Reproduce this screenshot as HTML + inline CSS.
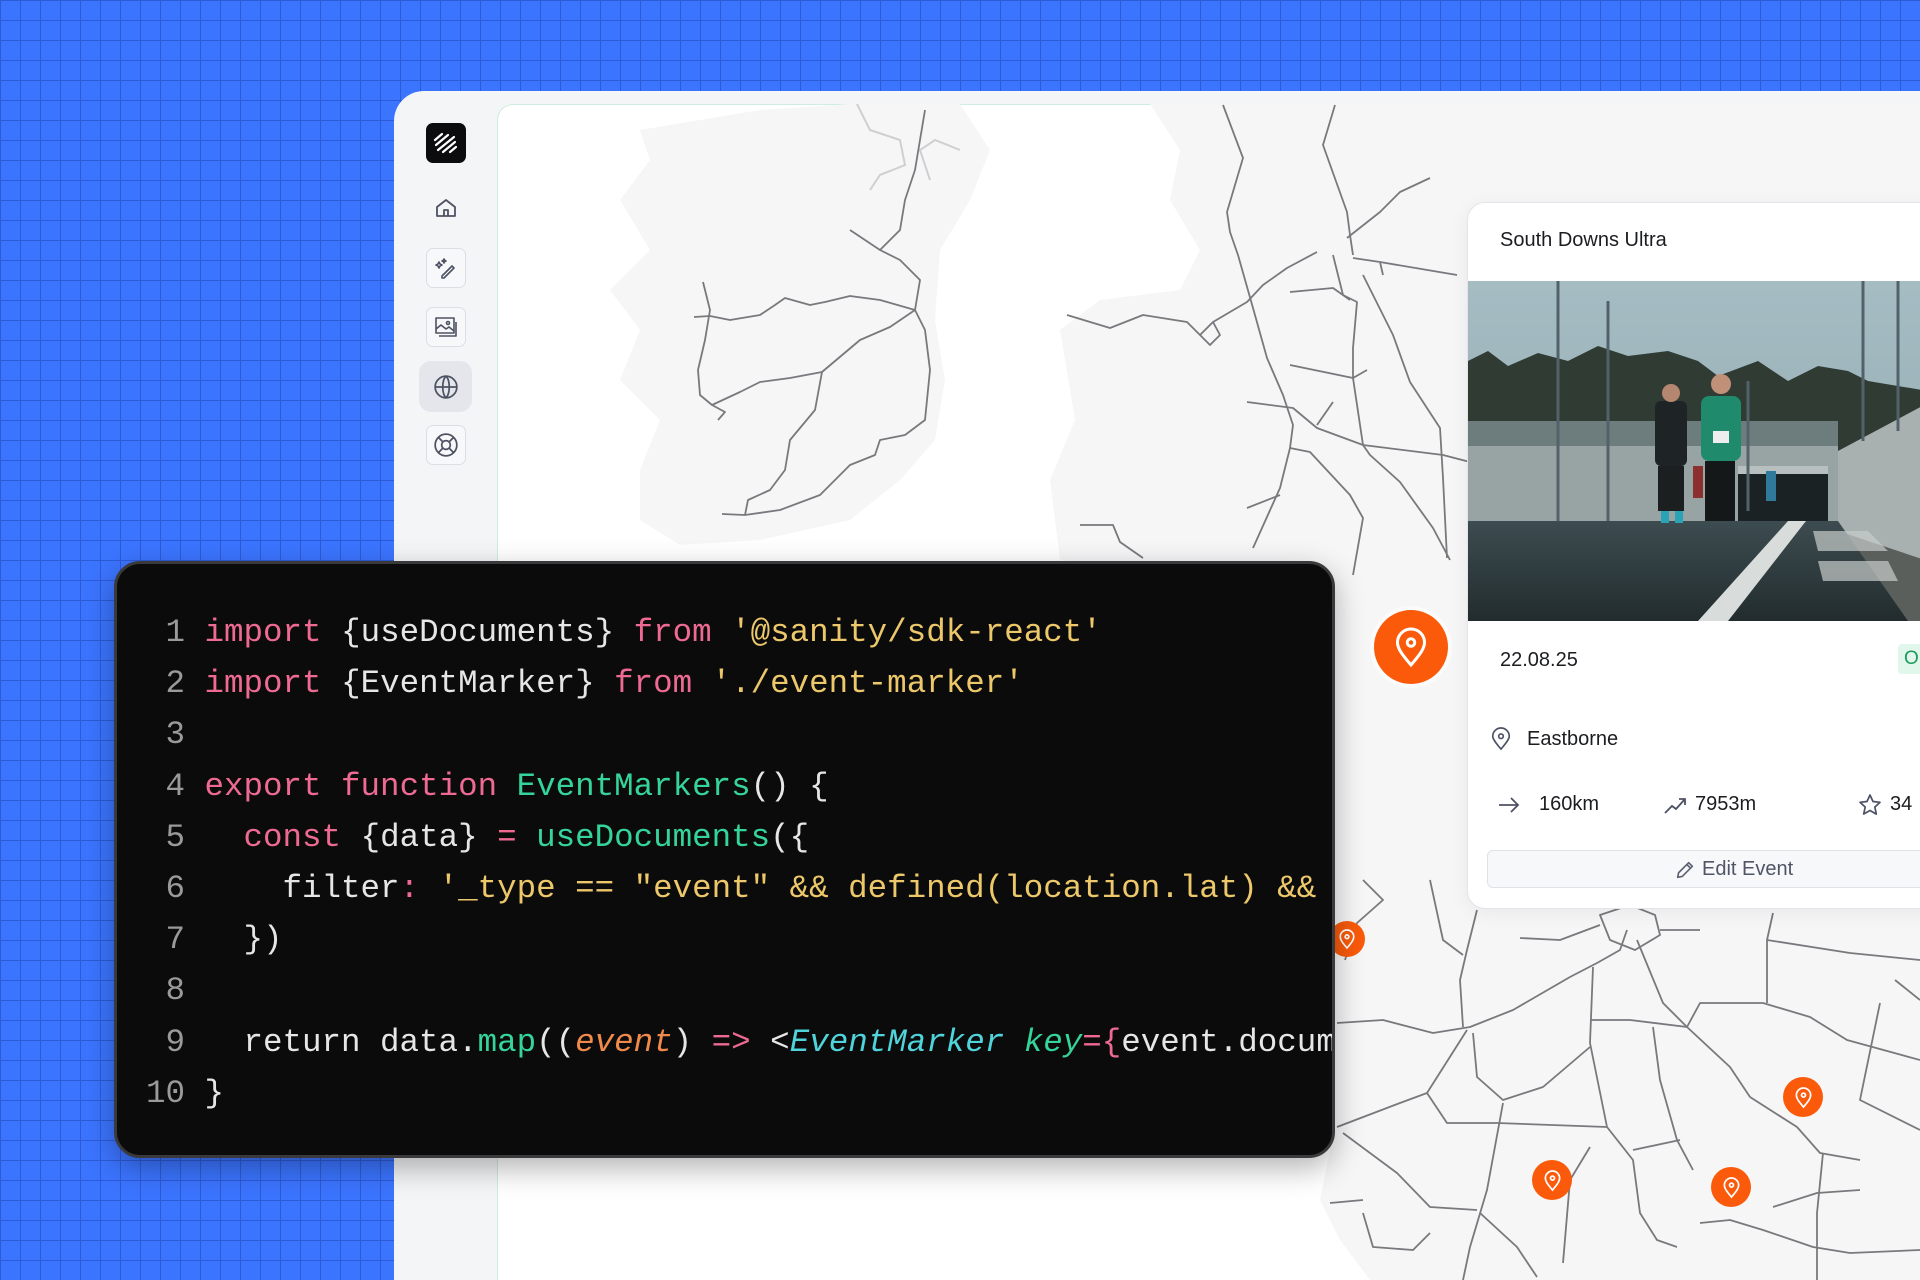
<!DOCTYPE html>
<html><head><meta charset="utf-8"><style>
*{margin:0;padding:0;box-sizing:border-box}
html,body{width:1920px;height:1280px;overflow:hidden}
body{position:relative;background-color:#3b74ff;
background-image:linear-gradient(#2d5bd6 1px,transparent 1px),linear-gradient(90deg,#2d5bd6 1px,transparent 1px);
background-size:20px 20px;font-family:"Liberation Sans",sans-serif}
.panel{position:absolute;left:394px;top:91px;width:1526px;height:1189px;background:#f4f5f7;border-radius:30px 0 0 0}
.map{position:absolute;left:497px;top:104px;width:1423px;height:1176px;background:#fff;border:1.5px solid #cdeede;border-right:none;border-bottom:none;border-radius:16px 0 0 0;overflow:hidden}
.sb{position:absolute;width:40px;height:40px;border-radius:7px;display:flex;align-items:center;justify-content:center}
.bx{border:1px solid #dcdee4;background:#f7f8fa}
.code{position:absolute;left:114px;top:561px;width:1221px;height:597px;background:#0b0b0b;border:3px solid #3a3a3c;border-radius:26px;overflow:hidden;box-shadow:0 10px 30px rgba(0,0,0,.3)}
pre{position:absolute;left:29px;top:43px;font-family:"Liberation Mono",monospace;font-size:32.5px;line-height:51.2px;color:#e6e6e6;white-space:pre}
.n{color:#9a9a9a}.k{color:#ee6a93}.s{color:#ecc86a}.f{color:#35d49b}.o{color:#f08a4b;font-style:italic}.c{color:#4fd4dc;font-style:italic}.g{color:#35d49b;font-style:italic}
.card{position:absolute;left:1467px;top:202px;width:520px;height:707px;background:#fff;border:1px solid #e3e5ea;border-radius:18px;overflow:hidden;box-shadow:0 4px 20px rgba(0,0,0,.06)}
.t{position:absolute;font-size:20px;color:#1c1d21}
.pin{position:absolute;border-radius:50%;background:#fa5a0a;display:flex;align-items:center;justify-content:center}
</style></head><body>
<div class="panel"></div>
<!-- sidebar -->
<div class="sb" style="left:426px;top:123px;background:#0c0c0e">
<svg width="28" height="24" viewBox="0 0 28 24" fill="none" stroke="#fff" stroke-width="2.2" stroke-linecap="round"><path d="M3 9l7-6M4 14l12-10M6 19l16-13M11 21l12-10M18 21l6-5"/></svg></div>
<div class="sb" style="left:426px;top:188px">
<svg width="24" height="24" viewBox="0 0 24 24" fill="none" stroke="#4d5263" stroke-width="1.8" stroke-linejoin="round"><path d="M3 11l9-7 9 7v9H3z"/><path d="M10 20v-6h4v6"/></svg></div>
<div class="sb bx" style="left:426px;top:248px">
<svg width="24" height="24" viewBox="0 0 24 24" fill="none" stroke="#4d5263" stroke-width="1.6" stroke-linejoin="round"><path d="M8 20l10-10 2 2-10 10H8z"/><path d="M5 6l1 2 2 1-2 1-1 2-1-2-2-1 2-1zM10 3l.6 1.2L12 5l-1.4.6L10 7l-.6-1.4L8 5l1.4-.8z"/></svg></div>
<div class="sb bx" style="left:426px;top:307px">
<svg width="24" height="24" viewBox="0 0 24 24" fill="none" stroke="#4d5263" stroke-width="1.6" stroke-linejoin="round"><rect x="2" y="3" width="18" height="15"/><path d="M5 21h17V7"/><path d="M2 14l5-4 5 4 3-2 5 4"/><circle cx="14" cy="8" r="1.5"/></svg></div>
<div class="sb" style="left:419px;top:361px;width:53px;height:51px;background:#e5e6eb;border-radius:12px">
<svg width="26" height="26" viewBox="0 0 24 24" fill="none" stroke="#4d5263" stroke-width="1.6"><circle cx="12" cy="12" r="10"/><path d="M2 12h20M12 2c-4 4-4 16 0 20M12 2c4 4 4 16 0 20"/></svg></div>
<div class="sb bx" style="left:426px;top:425px">
<svg width="26" height="26" viewBox="0 0 24 24" fill="none" stroke="#4d5263" stroke-width="1.6"><circle cx="12" cy="12" r="10"/><circle cx="12" cy="12" r="4"/><path d="M5 5l4 4M19 5l-4 4M5 19l4-4M19 19l-4-4"/></svg></div>

<div class="map"></div>
<svg style="position:absolute;left:497px;top:104px" width="1423" height="1176" viewBox="497 104 1423 1176">
<path fill="#f6f6f7" d="M640 130L760 110L850 104L960 104L990 150L970 200L940 250L935 320L945 380L935 440L900 480L850 520L760 540L680 545L640 520L640 470L660 420L620 380L640 330L610 290L650 250L620 200L650 160Z"/>
<path fill="#f6f6f7" d="M1150 104L1920 104L1920 1280L1370 1280L1340 1240L1320 1200L1330 1150L1320 600L1060 560L1050 480L1075 420L1060 330L1100 300L1180 290L1200 250L1170 200L1180 150Z"/>
<g fill="none" stroke="#cfcfd2" stroke-width="2"><path d="M857 104L870 130L900 140L905 165L880 175L870 190"/><path d="M930 180L920 150L935 140L960 150"/></g>
<g fill="none" stroke="#79797d" stroke-width="1.8" stroke-linejoin="round">
<path d="M694 317L710 316L730 320L760 315L775 305L785 298L810 305L825 302L850 296L880 300L915 310"/>
<path d="M703 282L710 310L705 340L698 370L700 395L712 405L725 412L718 420"/>
<path d="M712 405L740 392L760 382L790 378L822 372L860 340L890 327L915 310"/>
<path d="M822 372L815 410L790 440L785 470L770 490L748 500L745 515"/>
<path d="M722 514L745 515L780 510L820 495L850 465L875 455L880 440L905 435L925 420L930 370L925 330L915 310"/>
<path d="M915 310L920 280L900 260L880 250L900 230L905 200L915 170L920 140L925 110"/>
<path d="M880 250L865 240L850 230"/>
<path d="M1223 105L1243 158L1227 212L1230 232L1238 255L1253 308L1267 358L1283 395L1293 425L1290 448L1280 488L1253 548"/>
<path d="M1335 105L1323 145L1347 212L1350 235L1353 255"/>
<path d="M1333 255L1343 295L1357 302L1353 348L1353 378L1363 445L1370 455L1400 482L1433 528L1450 560"/>
<path d="M1363 275L1393 335L1410 382L1440 428L1443 478L1447 558"/>
<path d="M1347 238L1380 212L1400 192L1430 178"/>
<path d="M1317 252L1287 268L1263 285L1247 302L1213 322L1200 335"/>
<path d="M1067 315L1110 328L1143 315L1187 322L1200 335L1210 345L1220 335L1213 322"/>
<path d="M1290 292L1333 288L1350 300"/>
<path d="M1353 258L1380 262L1383 275M1380 262L1457 275"/>
<path d="M1290 365L1353 378L1367 370"/>
<path d="M1247 402L1293 408L1317 428L1363 445L1443 455L1470 462"/>
<path d="M1333 402L1317 425M1290 448L1310 452L1350 495L1363 518L1353 575"/>
<path d="M1247 508L1280 495"/>
<path d="M1080 525L1113 525L1120 542L1143 558"/>
<path d="M1337 1023L1383 1020L1433 1033L1470 1027L1513 1010L1570 977L1597 963L1620 950L1627 930"/>
<path d="M1463 1027L1460 980L1467 950L1477 910"/>
<path d="M1430 880L1443 940L1463 955"/>
<path d="M1363 880L1383 900L1357 923L1345 960"/>
<path d="M1473 1033L1477 1077L1503 1100L1543 1087L1590 1047"/>
<path d="M1593 967L1590 1043L1607 1127L1633 1160L1640 1213L1657 1240L1677 1247"/>
<path d="M1467 1030L1427 1093L1400 1103L1337 1127"/>
<path d="M1427 1093L1447 1123L1497 1123L1607 1127"/>
<path d="M1503 1103L1487 1190L1470 1247L1463 1280"/>
<path d="M1590 1020L1630 1020L1687 1027L1700 1003L1763 1003L1810 1017L1847 1040L1920 1060"/>
<path d="M1637 940L1663 1003L1687 1027L1730 1067L1750 1097L1797 1127L1820 1153L1860 1160"/>
<path d="M1653 1027L1660 1080L1677 1140L1693 1170"/>
<path d="M1633 1150L1680 1140"/>
<path d="M1773 913L1767 940L1767 1003"/>
<path d="M1767 940L1850 953L1920 960"/>
<path d="M1700 1223L1730 1220L1763 1230L1813 1247L1850 1253L1920 1250"/>
<path d="M1823 1153L1817 1213L1817 1280"/>
<path d="M1773 1207L1817 1193L1860 1190"/>
<path d="M1343 1133L1397 1173L1430 1207L1477 1210"/>
<path d="M1363 1213L1373 1247L1413 1250L1430 1233"/>
<path d="M1480 1213L1517 1247L1537 1277"/>
<path d="M1563 1263L1570 1180L1590 1147"/>
<path d="M1330 1203L1363 1200"/>
<path d="M1600 915L1630 905L1655 915L1660 935L1635 950L1610 940Z"/>
<path d="M1520 938L1560 940L1600 925M1660 930L1700 930"/>
<path d="M1895 980L1920 1000M1880 1003L1860 1100L1920 1130"/>
</g>
</svg>

<!-- pins -->
<div class="pin" style="left:1374px;top:610px;width:74px;height:74px;box-shadow:0 0 0 4px rgba(255,255,255,.6)">
<svg width="36" height="42" viewBox="0 0 24 28" fill="none" stroke="#fff" stroke-width="2"><path d="M12 26C6 19 3 15 3 11a9 9 0 0118 0c0 4-3 8-9 15z"/><circle cx="12" cy="11" r="2.5"/></svg></div>
<div class="pin" style="left:1329px;top:921px;width:36px;height:36px"><svg width="18" height="22" viewBox="0 0 24 28" fill="none" stroke="#fff" stroke-width="2.2"><path d="M12 26C6 19 3 15 3 11a9 9 0 0118 0c0 4-3 8-9 15z"/><circle cx="12" cy="11" r="2.5"/></svg></div>
<div class="pin" style="left:1783px;top:1077px;width:40px;height:40px"><svg width="19" height="23" viewBox="0 0 24 28" fill="none" stroke="#fff" stroke-width="2.2"><path d="M12 26C6 19 3 15 3 11a9 9 0 0118 0c0 4-3 8-9 15z"/><circle cx="12" cy="11" r="2.5"/></svg></div>
<div class="pin" style="left:1532px;top:1160px;width:40px;height:40px"><svg width="19" height="23" viewBox="0 0 24 28" fill="none" stroke="#fff" stroke-width="2.2"><path d="M12 26C6 19 3 15 3 11a9 9 0 0118 0c0 4-3 8-9 15z"/><circle cx="12" cy="11" r="2.5"/></svg></div>
<div class="pin" style="left:1711px;top:1167px;width:40px;height:40px"><svg width="19" height="23" viewBox="0 0 24 28" fill="none" stroke="#fff" stroke-width="2.2"><path d="M12 26C6 19 3 15 3 11a9 9 0 0118 0c0 4-3 8-9 15z"/><circle cx="12" cy="11" r="2.5"/></svg></div>

<!-- card -->
<div class="card">
<div class="t" style="left:32px;top:26px">South Downs Ultra</div>
<svg style="position:absolute;left:0;top:78px" width="520" height="340" viewBox="0 0 520 340">
<defs><linearGradient id="sky" x1="0" y1="0" x2="0" y2="1"><stop offset="0" stop-color="#a6bcc3"/><stop offset="1" stop-color="#8ea7ae"/></linearGradient>
<linearGradient id="rd" x1="0" y1="0" x2="0" y2="1"><stop offset="0" stop-color="#3d4c50"/><stop offset="1" stop-color="#222c2e"/></linearGradient></defs>
<rect width="520" height="340" fill="url(#sky)"/>
<path d="M0 80L20 70L40 85L70 72L100 80L130 65L160 75L200 70L230 80L250 95L290 80L320 100L350 85L380 90L400 100L460 110L520 100L520 200L0 200Z" fill="#2f3b33"/>
<rect x="0" y="140" width="370" height="30" fill="#7d8e91" opacity=".8"/>
<rect x="0" y="165" width="370" height="80" fill="#98a3a3"/>
<rect x="270" y="190" width="90" height="55" fill="#1b2223"/>
<rect x="270" y="185" width="90" height="8" fill="#b8c0bf"/>
<path d="M370 170L520 90L520 340L370 245Z" fill="#a9b1b0"/>
<path d="M355 245L520 300L520 340L380 340Z" fill="#5a5f5c"/>
<path d="M0 240L370 240L440 340L0 340Z" fill="url(#rd)"/>
<path d="M320 240L338 240L260 340L230 340Z" fill="#d8dcda"/>
<path d="M345 250L400 250L420 270L350 270Z" fill="#c7cccb" opacity=".7"/>
<path d="M350 280L420 280L430 300L355 300Z" fill="#c7cccb" opacity=".7"/>
<g stroke="#53626a" stroke-width="3"><path d="M90 0V240M140 20V240M280 100V230M395 0V160M430 0V150M470 30V160"/></g>
<rect x="187" y="120" width="32" height="65" fill="#1e2426" rx="6"/><rect x="190" y="185" width="26" height="45" fill="#1b1f20"/>
<rect x="193" y="230" width="8" height="12" fill="#2aa3b7"/><rect x="207" y="230" width="8" height="12" fill="#2aa3b7"/>
<circle cx="203" cy="112" r="9" fill="#b58770"/>
<rect x="233" y="115" width="40" height="65" fill="#1f8a6c" rx="8"/><rect x="237" y="180" width="30" height="60" fill="#141818"/>
<circle cx="253" cy="103" r="10" fill="#c09078"/>
<rect x="245" y="150" width="16" height="12" fill="#eee"/>
<rect x="225" y="185" width="10" height="32" fill="#8c2f2f"/><rect x="298" y="190" width="10" height="30" fill="#2f7a9a"/>
</svg>
<div class="t" style="left:32px;top:446px;font-size:20px">22.08.25</div>
<div style="position:absolute;left:430px;top:441px;background:#e2f7eb;color:#1b9c5c;font-size:19px;padding:4px 6px;border-radius:4px">Open</div>
<svg style="position:absolute;left:22px;top:524px" width="22" height="24" viewBox="0 0 24 26" fill="none" stroke="#4d5263" stroke-width="1.8"><path d="M12 24C6 17 3 13 3 10a9 9 0 0118 0c0 3-3 7-9 14z"/><circle cx="12" cy="10" r="2.5"/></svg>
<div class="t" style="left:59px;top:525px;font-size:20px">Eastborne</div>
<svg style="position:absolute;left:29px;top:591px" width="24" height="22" viewBox="0 0 24 22" fill="none" stroke="#4d5263" stroke-width="1.8"><path d="M2 11h19M14 4l7 7-7 7"/></svg>
<div class="t" style="left:71px;top:590px;font-size:20px">160km</div>
<svg style="position:absolute;left:195px;top:591px" width="24" height="22" viewBox="0 0 24 22" fill="none" stroke="#4d5263" stroke-width="1.8"><path d="M2 19l7-7 4 3 9-10M16 5h6v6"/></svg>
<div class="t" style="left:227px;top:590px;font-size:20px">7953m</div>
<svg style="position:absolute;left:390px;top:590px" width="24" height="24" viewBox="0 0 24 24" fill="none" stroke="#4d5263" stroke-width="1.7" stroke-linejoin="round"><path d="M12 2l3 6.5 7 .8-5.2 4.8 1.5 7L12 17.5 5.7 21l1.5-7L2 9.3l7-.8z"/></svg>
<div class="t" style="left:422px;top:590px;font-size:20px">34</div>
<div style="position:absolute;left:19px;top:647px;width:520px;height:38px;border:1px solid #dfe1e6;background:#f7f8fa;border-radius:6px"></div>
<svg style="position:absolute;left:206px;top:656px" width="22" height="22" viewBox="0 0 24 24" fill="none" stroke="#5d6273" stroke-width="1.8" stroke-linejoin="round"><path d="M4 20l1-5L16 4l4 4L9 19zM14 6l4 4"/></svg>
<div class="t" style="left:234px;top:655px;font-size:20px;color:#4f5466">Edit Event</div>
</div>

<!-- code -->
<div class="code"><pre><span class="n"> 1</span> <span class="k">import</span> {useDocuments} <span class="k">from</span> <span class="s">'@sanity/sdk-react'</span>
<span class="n"> 2</span> <span class="k">import</span> {EventMarker} <span class="k">from</span> <span class="s">'./event-marker'</span>
<span class="n"> 3</span>
<span class="n"> 4</span> <span class="k">export function</span> <span class="f">EventMarkers</span>() {
<span class="n"> 5</span>   <span class="k">const</span> {data} <span class="k">=</span> <span class="f">useDocuments</span>({
<span class="n"> 6</span>     filter<span class="k">:</span> <span class="s">'_type == "event" &amp;&amp; defined(location.lat) &amp;&amp; defined(location.lng)'</span>
<span class="n"> 7</span>   })
<span class="n"> 8</span>
<span class="n"> 9</span>   return data.<span class="f">map</span>((<span class="o">event</span>) <span class="k">=&gt;</span> &lt;<span class="c">EventMarker</span> <span class="g">key</span><span class="k">={</span>event.documentId} /&gt;)
<span class="n">10</span> }</pre></div>
</body></html>
